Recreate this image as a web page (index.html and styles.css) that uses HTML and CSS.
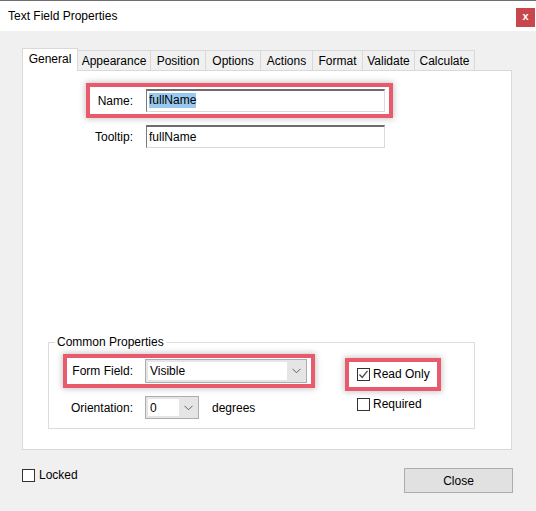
FILE: index.html
```html
<!DOCTYPE html>
<html>
<head>
<meta charset="utf-8">
<title>Text Field Properties</title>
<link rel="stylesheet" href="styles.css">
</head>
<body>
<div class="window">
  <div class="titlebar">
    <span class="title">Text Field Properties</span>
    <span class="close-btn">x</span>
  </div>
  <div class="content">
    <div class="tabs">
      <div class="tab active t-general">General</div>
      <div class="tab t-appearance">Appearance</div>
      <div class="tab t-position">Position</div>
      <div class="tab t-options">Options</div>
      <div class="tab t-actions">Actions</div>
      <div class="tab t-format">Format</div>
      <div class="tab t-validate">Validate</div>
      <div class="tab t-calculate">Calculate</div>
    </div>
    <div class="panel">
      <div class="row name-row highlight">
        <span class="lbl">Name:</span>
        <div class="input"><span class="selected-text">fullName</span></div>
      </div>
      <div class="row tooltip-row">
        <span class="lbl">Tooltip:</span>
        <div class="input">fullName</div>
      </div>
      <fieldset class="group">
        <legend>Common Properties</legend>
        <div class="group-cols">
          <div class="col-left">
            <div class="row form-row highlight">
              <span class="lbl lbl-wide">Form Field:</span>
              <div class="select sel-visible">
                <span class="val">Visible</span>
                <span class="arrow"><svg width="9" height="6" viewBox="0 0 9 6"><polyline points="0.5,0.8 4.5,4.8 8.5,0.8" fill="none" stroke="#606060" stroke-width="1"/></svg></span>
              </div>
            </div>
            <div class="row orient-row">
              <span class="lbl lbl-wide">Orientation:</span>
              <div class="select sel-orient">
                <span class="val">0</span>
                <span class="arrow"><svg width="9" height="6" viewBox="0 0 9 6"><polyline points="0.5,0.8 4.5,4.8 8.5,0.8" fill="none" stroke="#606060" stroke-width="1"/></svg></span>
              </div>
              <span class="unit">degrees</span>
            </div>
          </div>
          <div class="col-right">
            <div class="ro-box highlight">
              <span class="check"><svg width="11" height="11" viewBox="0 0 11 11"><polyline points="1.5,5.5 4.2,8.5 9.5,1.8" fill="none" stroke="#4a4a4a" stroke-width="1.3"/></svg></span>
              <span>Read Only</span>
            </div>
            <div class="check-row required-row">
              <span class="check"></span>
              <span>Required</span>
            </div>
          </div>
        </div>
      </fieldset>
    </div>
    <div class="footer">
      <div class="check-row locked-row">
        <span class="check"></span>
        <span>Locked</span>
      </div>
      <div class="button">Close</div>
    </div>
  </div>
</div>
</body>
</html>
```

FILE: styles.css
```css
html, body {
  margin: 0;
  padding: 0;
}
body {
  background: #f0f0f0;
  font-family: "Liberation Sans", Arial, sans-serif;
  font-size: 12px;
  color: #000;
}
.window {
  width: 536px;
  height: 511px;
  box-sizing: border-box;
  border-top: 1px solid #6e6e6e;
}
.titlebar {
  height: 30px;
  background: #fff;
  display: flex;
  justify-content: space-between;
  align-items: flex-start;
  padding-left: 8px;
}
.title {
  line-height: 16px;
  margin-top: 7px;
}
.close-btn {
  width: 19px;
  height: 19px;
  margin-top: 7px;
  margin-right: 1px;
  background: #c8474c;
  color: #fff;
  font-weight: bold;
  font-size: 11px;
  display: flex;
  align-items: center;
  justify-content: center;
  line-height: 1;
  padding-bottom: 2px;
  box-sizing: border-box;
}
.content {
  padding: 17px 24px 0 22px;
}
.tabs {
  display: flex;
  align-items: flex-end;
  height: 22px;
  position: relative;
  z-index: 1;
}
.tab {
  box-sizing: border-box;
  height: 20px;
  border: 1px solid #d9d9d9;
  border-bottom: none;
  margin-left: -1px;
  display: flex;
  align-items: center;
  justify-content: center;
  background: #f0f0f0;
  padding-top: 1px;
  line-height: 14px;
}
.tab.active {
  height: 23px;
  margin-bottom: -1px;
  margin-left: 0;
  background: #fff;
  position: relative;
  z-index: 2;
  padding-top: 0;
  padding-bottom: 2px;
}
.t-general { width: 56px; }
.t-appearance { width: 74px; }
.t-position { width: 56px; }
.t-options { width: 56px; }
.t-actions { width: 53px; }
.t-format { width: 51px; }
.t-validate { width: 53px; }
.t-calculate { width: 61px; }

.panel {
  box-sizing: border-box;
  width: 490px;
  height: 380px;
  background: #fff;
  border: 1px solid #d9d9d9;
  display: flex;
  flex-direction: column;
  align-items: flex-start;
}
.highlight {
  border: 4px solid #e95a6c;
  box-shadow: 0 0 6px 1px rgba(0, 0, 0, 0.22);
}
.row {
  display: flex;
  align-items: center;
}
.lbl {
  width: 43px;
  text-align: right;
  margin-right: 13px;
  flex: none;
}
.name-row {
  margin: 12px 0 0 63px;
  padding: 2px 4px 2px 0;
}
.tooltip-row {
  margin: 7px 0 0 67px;
}
.input {
  box-sizing: border-box;
  width: 239px;
  height: 23px;
  background: #fff;
  border: 1px solid #dadada;
  border-top: 2px solid #6d6d6d;
  border-left: 1px solid #7a7a7a;
  padding-left: 2px;
  display: flex;
  align-items: center;
  padding-bottom: 1px;
}
.selected-text {
  background: #99c9ef;
  line-height: 15px;
}

.group {
  box-sizing: border-box;
  width: 427px;
  margin: auto 0 20px 25px;
  border: 1px solid #dcdcdc;
  padding: 0 0 9px 0;
  min-width: 0;
}
.group legend {
  padding: 0 2px;
  margin-left: 6px;
  line-height: 16px;
}
.group-cols {
  display: flex;
  align-items: flex-start;
  margin-left: 14px;
  margin-top: 4px;
}
.form-row {
  padding: 1px 4px 1px 0;
}
.lbl-wide {
  width: 66px;
  margin-right: 12px;
}
.select {
  box-sizing: border-box;
  height: 24px;
  border: 1px solid #adadad;
  background: #e5e5e5;
  display: flex;
  padding: 2px 0 2px 2px;
}
.select .val {
  flex: 1;
  background: #fff;
  padding-left: 2px;
  display: flex;
  align-items: center;
}
.select .arrow {
  width: 19px;
  display: flex;
  align-items: center;
  justify-content: center;
}
.sel-visible { width: 162px; }
.sel-orient { width: 54px; height: 23px; }
.orient-row {
  margin: 8px 0 0 4px;
}
.unit {
  margin-left: 13px;
}
.col-right {
  margin-left: 30px;
}
.ro-box {
  box-sizing: border-box;
  width: 96px;
  height: 33px;
  margin-top: 4px;
  padding-left: 8px;
  padding-bottom: 1px;
  display: flex;
  align-items: center;
  white-space: nowrap;
}
.check {
  box-sizing: border-box;
  width: 13px;
  height: 13px;
  border: 1px solid #333;
  background: #fff;
  margin-right: 3px;
  flex: none;
  display: flex;
}
.check-row {
  display: flex;
  align-items: center;
  line-height: 16px;
}
.required-row {
  margin: 5px 0 0 12px;
}
.footer {
  display: flex;
  justify-content: space-between;
  align-items: flex-start;
}
.locked-row {
  margin-top: 17px;
}
.locked-row .check {
  margin-right: 4px;
}
.button {
  box-sizing: border-box;
  width: 109px;
  height: 25px;
  margin-top: 18px;
  margin-right: -1px;
  border: 1px solid #adadad;
  background: #e1e1e1;
  display: flex;
  align-items: center;
  justify-content: center;
}
```
